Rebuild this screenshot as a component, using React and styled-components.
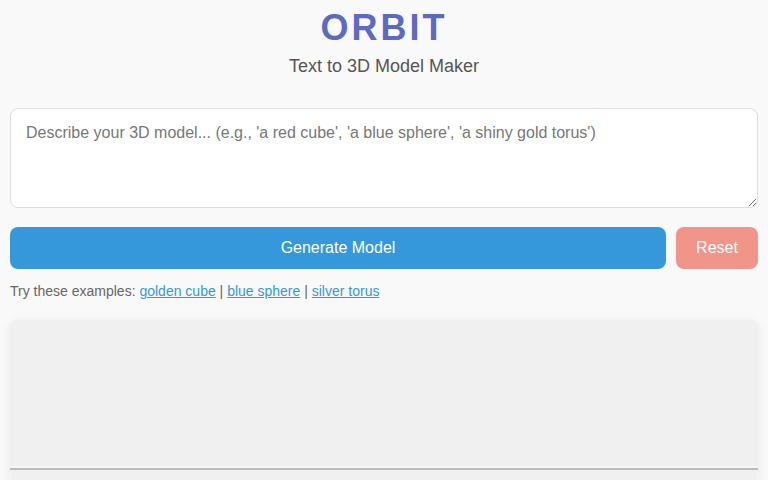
import styled, { createGlobalStyle } from "styled-components";

const Global = createGlobalStyle`
  html, body {
    margin: 0;
    padding: 0;
    background: #f9f9f9;
    font-family: "Liberation Sans", Arial, sans-serif;
  }
`;

const Page = styled.div`
  padding: 7px 10px 0;
  display: flex;
  flex-direction: column;
`;

const Title = styled.h1`
  margin: 0;
  text-align: center;
  font-size: 36px;
  font-weight: 700;
  letter-spacing: 3px;
  color: #5c6bc0;
  line-height: 41px;
`;

const Subtitle = styled.p`
  margin: 8px 0 0;
  text-align: center;
  font-size: 18px;
  line-height: 21px;
  color: #555;
`;

const Prompt = styled.textarea`
  margin-top: 31px;
  box-sizing: border-box;
  width: 100%;
  height: 100px;
  padding: 15px;
  border: 1px solid #ddd;
  border-radius: 8px;
  background: #fff;
  font-family: "Liberation Sans", Arial, sans-serif;
  font-size: 16px;
  line-height: 18px;
  color: #333;
  resize: vertical;
  outline: none;

  &::placeholder {
    color: #777;
  }
`;

const Actions = styled.div`
  margin-top: 19px;
  display: flex;
  gap: 10px;
`;

const Button = styled.button`
  flex: ${(p) => (p.$grow ? 1 : "none")};
  width: ${(p) => (p.$grow ? "auto" : "82px")};
  height: 42px;
  border: none;
  border-radius: 8px;
  background: ${(p) => p.$bg};
  color: #fff;
  font-family: "Liberation Sans", Arial, sans-serif;
  font-size: 16px;
  cursor: pointer;
`;

const Examples = styled.div`
  margin-top: 14px;
  font-size: 14px;
  line-height: 16px;
  color: #666;
`;

const Example = styled.a`
  color: #3498db;
  text-decoration: underline;
  cursor: pointer;
`;

const Viewer = styled.div`
  margin-top: 21px;
  height: 160px;
  background: #f0f0f0;
  border-radius: 8px 8px 0 0;
  box-shadow: 0 2px 10px rgba(0, 0, 0, 0.08);
  display: flex;
  flex-direction: column;
  overflow: hidden;
`;

const Stage = styled.div`
  height: 146px;
  border-bottom: 2px solid #f6f6f6;
`;

const Track = styled.div`
  height: 2px;
  background: #bbb;
`;

export default function App() {
  const examples = ["golden cube", "blue sphere", "silver torus"];
  return (
    <>
      <Global />
      <Page>
        <Title>ORBIT</Title>
        <Subtitle>Text to 3D Model Maker</Subtitle>
        <Prompt placeholder="Describe your 3D model... (e.g., 'a red cube', 'a blue sphere', 'a shiny gold torus')" />
        <Actions>
          <Button $grow $bg="#3498db">Generate Model</Button>
          <Button $bg="#f1948a">Reset</Button>
        </Actions>
        <Examples>
          Try these examples:{" "}
          {examples.map((ex, i) => (
            <span key={ex}>
              <Example>{ex}</Example>
              {i < examples.length - 1 ? " | " : ""}
            </span>
          ))}
        </Examples>
        <Viewer>
          <Stage />
          <Track />
        </Viewer>
      </Page>
    </>
  );
}
